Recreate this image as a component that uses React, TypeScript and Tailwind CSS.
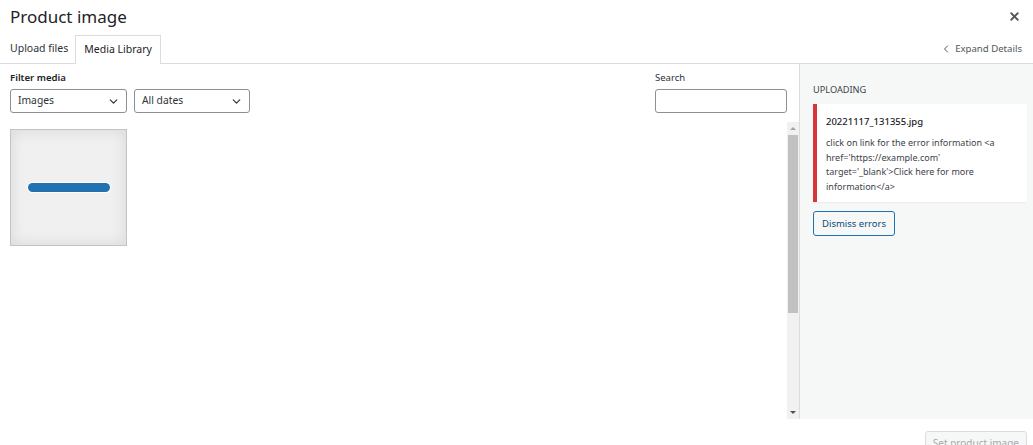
import { ChevronDown, ChevronLeft, X } from 'lucide-react';

const FONT = { fontFamily: '"Segoe UI", "Noto Sans", sans-serif' };

function Select({ label, width }: { label: string; width: string }) {
    return (
        <div className={`${width} h-[24px] border border-[#8c8f94] rounded-[3px] bg-white flex items-center justify-between pl-[7px] pr-[6px] text-[10.3px] text-[#2c3338]`}>
            <span>{label}</span>
            <ChevronDown size={13} strokeWidth={2.2} className="text-[#2c3338]" />
        </div>
    );
}

export default function App() {
    return (
        <div className="h-[445px] w-full bg-white flex flex-col overflow-hidden text-[#1d2327]" style={FONT}>
            {/* header */}
            <div className="h-[35px] flex items-center justify-between pl-[10px] pr-[12px] pb-[2px]">
                <h1 className="text-[17px] leading-none">Product image</h1>
                <X size={13} strokeWidth={3.4} className="text-[#50575e]" />
            </div>

            {/* tabs */}
            <div className="h-[29px] flex items-end justify-between border-b border-[#dcdcde]">
                <div className="flex items-end h-full text-[10.5px] text-[#2c3338]">
                    <div className="h-full flex items-center pl-[10px] pr-[7px]">Upload files</div>
                    <div className="h-[29px] -mb-px flex items-center px-[8px] bg-white border border-b-0 border-[#dcdcde] text-[#1d2327]">Media Library</div>
                </div>
                <div className="h-full flex items-center gap-[3px] pr-[11px] text-[9.6px] text-[#50575e]">
                    <ChevronLeft size={12} strokeWidth={2} />
                    <span>Expand Details</span>
                </div>
            </div>

            {/* body */}
            <div className="flex-1 flex min-h-0">
                <div className="flex-1 flex flex-col min-w-0">
                    <div className="h-[58px] flex justify-between pl-[10px] pr-[12px] pt-[7px]">
                        <div>
                            <div className="text-[9.6px] font-semibold leading-[14px] mb-[4px]">Filter media</div>
                            <div className="flex gap-[7px]">
                                <Select label="Images" width="w-[117px]" />
                                <Select label="All dates" width="w-[116px]" />
                            </div>
                        </div>
                        <div>
                            <div className="text-[9.5px] leading-[14px] mb-[4px] text-[#2c3338]">Search</div>
                            <div className="w-[132px] h-[24px] border border-[#8c8f94] rounded-[3px] bg-white" />
                        </div>
                    </div>
                    <div className="flex-1 flex min-h-0">
                        <div className="flex-1 pl-[10px] pt-[7px]">
                            <div className="w-[117px] h-[117px] bg-[#f0f0f1] border border-[#c3c4c7] shadow-[inset_0_0_15px_rgba(0,0,0,0.1)] flex items-center justify-center">
                                <div className="w-[82px] h-[9px] rounded-full bg-[#2271b1] ring-1 ring-white" />
                            </div>
                        </div>
                        {/* scrollbar */}
                        <div className="w-[12px] bg-[#f1f1f1] flex flex-col items-center">
                            <div className="h-[13px] flex items-center justify-center">
                                <div className="w-0 h-0 border-x-[3px] border-x-transparent border-b-[3px] border-b-[#a3a3a3]" />
                            </div>
                            <div className="w-[10px] h-[178px] bg-[#c1c1c1]" />
                            <div className="flex-1" />
                            <div className="h-[13px] flex items-center justify-center">
                                <div className="w-0 h-0 border-x-[3px] border-x-transparent border-t-[3px] border-t-[#505050]" />
                            </div>
                        </div>
                    </div>
                </div>

                {/* sidebar */}
                <div className="w-[234px] bg-[#f6f7f7] border-l border-[#dcdcde] pl-[13px] pr-[6px] pt-[19px]">
                    <div className="text-[9.2px] leading-[14px] text-[#3c434a] mb-[7px]">UPLOADING</div>
                    <div className="bg-white border-l-4 border-[#d63638] pl-[9px] pr-[8px] pt-[11px] pb-[8px] shadow-[0_1px_1px_rgba(0,0,0,0.04)]">
                        <div className="text-[9.5px] font-medium leading-[14px] mb-[7px]">20221117_131355.jpg</div>
                        <div className="text-[9px] leading-[14.6px] text-[#3c434a]">
                            click on link for the error information &lt;a href='https://example.com' target='_blank'&gt;Click here for more information&lt;/a&gt;
                        </div>
                    </div>
                    <button className="mt-[9px] h-[25px] px-[8px] border border-[#2271b1] rounded-[3px] bg-[#f6f7f7] text-[9.5px] text-[#0a4b78]">
                        Dismiss errors
                    </button>
                </div>
            </div>

            {/* footer */}
            <div className="h-[26px] shrink-0 flex flex-col">
                <div className="h-px flex">
                    <div className="w-[3px] bg-[#dcdcde]" />
                    <div className="w-[777px]" />
                    <div className="flex-1 bg-[#dcdcde]" />
                </div>
                <div className="flex-1 flex justify-end pr-[6px] pt-[12px]">
                    <div className="h-[30px] px-[7px] border border-[#dcdcde] rounded-[3px] bg-[#f6f7f7] text-[10px] text-[#a7aaad] pt-[3px] leading-[16px]">
                        Set product image
                    </div>
                </div>
            </div>
        </div>
    );
}
